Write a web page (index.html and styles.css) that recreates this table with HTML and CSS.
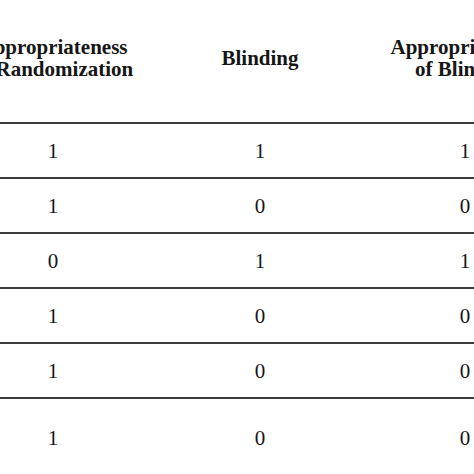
FILE: index.html
```html
<!DOCTYPE html>
<html lang="en">
<head>
<meta charset="utf-8">
<title>Risk of bias table</title>
<link rel="stylesheet" href="styles.css">
</head>
<body>
<table class="bias-table">
  <colgroup>
    <col class="col-a">
    <col class="col-b">
    <col class="col-c">
  </colgroup>
  <thead>
    <tr>
      <th>Appropriateness<br>of Randomization</th>
      <th>Blinding</th>
      <th>Appropriateness<br>of Blinding</th>
    </tr>
  </thead>
  <tbody>
    <tr><td>1</td><td>1</td><td>1</td></tr>
    <tr><td>1</td><td>0</td><td>0</td></tr>
    <tr><td>0</td><td>1</td><td>1</td></tr>
    <tr><td>1</td><td>0</td><td>0</td></tr>
    <tr><td>1</td><td>0</td><td>0</td></tr>
    <tr class="last"><td>1</td><td>0</td><td>0</td></tr>
  </tbody>
</table>
</body>
</html>
```

FILE: styles.css
```css
html, body {
  margin: 0;
  padding: 0;
  background: #ffffff;
  overflow: hidden;
}

.bias-table {
  border-collapse: collapse;
  table-layout: fixed;
  width: 618px;
  margin-left: -51px;
  font-family: "Liberation Serif", "Times New Roman", serif;
  font-size: 21px;
  color: #161616;
}

.col-a { width: 208px; }
.col-b { width: 206px; }
.col-c { width: 204px; }

.bias-table th {
  height: 116px;
  padding: 0 0 6px;
  font-weight: bold;
  line-height: 22px;
  text-align: center;
  vertical-align: middle;
  border-bottom: 2px solid #3c3c3c;
}

.bias-table td {
  height: 53px;
  padding: 0;
  line-height: 22px;
  text-align: center;
  vertical-align: middle;
  border-bottom: 2px solid #3c3c3c;
}

.bias-table tr.last td {
  height: 78px;
  border-bottom: none;
}
```
